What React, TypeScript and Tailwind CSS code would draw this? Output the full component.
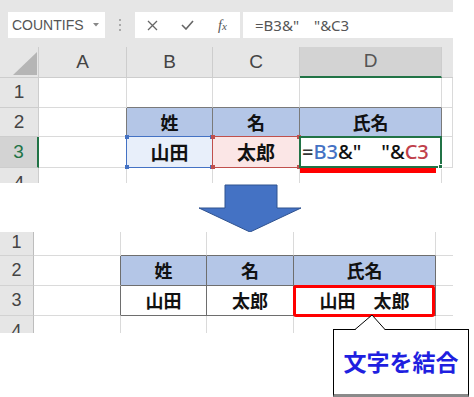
import React from "react";

const RH = "flex items-center justify-center bg-[#e6e6e6] border-r border-b border-[#cdcdcd] text-[19px] text-[#444] font-['Liberation_Sans',sans-serif]";
const CH = "flex items-center justify-center bg-[#e6e6e6] border-r border-b border-[#cdcdcd] text-[19px] text-[#444] font-['Liberation_Sans',sans-serif]";
const PLAIN = "border-r border-b border-[#dadada]";
const ABOVE = "border-r border-[#dadada] border-b border-b-[#7a7a7a]";
const LEFTOF = "border-b border-[#dadada] border-r border-r-[#7a7a7a]";
const HDR = "flex items-center justify-center bg-[#b4c6e7] border-r border-b border-[#7a7a7a] text-[18px] font-bold text-[#111] font-['Noto_Sans_CJK_JP',sans-serif]";
const ABOVE2 = "border-r border-[#dadada] border-b border-b-[#6e6e6e]";
const LEFTOF2 = "border-b border-[#dadada] border-r border-r-[#6e6e6e]";
const HDR2 = "flex items-center justify-center bg-[#b4c6e7] border-r border-b border-[#6e6e6e] text-[18px] font-bold text-[#111] font-['Noto_Sans_CJK_JP',sans-serif]";
const VAL2 = "relative flex items-center justify-center bg-white border-r border-b border-[#6e6e6e] text-[18px] font-bold text-[#111] font-['Noto_Sans_CJK_JP',sans-serif]";

function Toolbar() {
  return (
    <div className="flex h-[47px] items-start bg-[#e6e6e6] pt-[12px]">
      <div className="ml-[8px] flex h-[26px] w-[97px] items-center justify-between bg-white pl-[4px] pr-[6px]">
        <span className="font-['Liberation_Sans',sans-serif] text-[14px] text-[#555]">COUNTIFS</span>
        <svg width="6" height="4" viewBox="0 0 6 4">
          <polygon points="0,0 6,0 3,3.5" fill="#888" />
        </svg>
      </div>
      <div className="flex h-[26px] w-[30px] flex-col items-center justify-center gap-[3px]">
        <span className="h-[2px] w-[2px] bg-[#aaa]" />
        <span className="h-[2px] w-[2px] bg-[#aaa]" />
        <span className="h-[2px] w-[2px] bg-[#aaa]" />
      </div>
      <div className="flex h-[26px] w-[105px] items-center bg-white">
        <div className="flex w-[35px] justify-center">
          <svg width="11" height="11" viewBox="0 0 11 11">
            <path d="M1 1 L10 10 M10 1 L1 10" stroke="#666" strokeWidth="1.3" />
          </svg>
        </div>
        <div className="flex w-[35px] justify-center">
          <svg width="13" height="10" viewBox="0 0 13 10">
            <path d="M1 5 L5 9 L12 1" stroke="#666" strokeWidth="1.6" fill="none" />
          </svg>
        </div>
        <div className="flex w-[35px] justify-center">
          <span className="font-['Liberation_Serif',serif] text-[14px] italic text-[#555]">
            f<span className="text-[11px]">x</span>
          </span>
        </div>
      </div>
      <div className="ml-[3px] flex h-[26px] flex-1 items-center bg-white pl-[12px] font-['Noto_Sans',sans-serif] text-[15px] text-[#555]">
        =B3&amp;"　"&amp;C3
      </div>
    </div>
  );
}

function TopSheet() {
  return (
    <div className="w-[453px]">
      <Toolbar />
      <div className="grid grid-cols-[39px_88px_86px_87px_142px_11px] grid-rows-[31px_30px_29px_31px_15px]">
        <div className="relative bg-[#e6e6e6] border-r border-b border-[#cdcdcd]">
          <svg className="absolute left-0 top-0" width="39" height="31" viewBox="0 0 39 31">
            <polygon points="13,28 37,28 37,5" fill="#b5b5b5" />
          </svg>
        </div>
        <div className={CH}>A</div>
        <div className={CH}>B</div>
        <div className={CH}>C</div>
        <div className="flex items-center justify-center bg-[#d3d3d3] border-r border-[#cdcdcd] border-b-2 border-b-[#217346] text-[19px] text-[#555] font-['Liberation_Sans',sans-serif]">D</div>
        <div className="bg-[#e6e6e6] border-b border-[#cdcdcd]" />

        <div className={RH}>1</div>
        <div className={PLAIN} />
        <div className={ABOVE} />
        <div className={ABOVE} />
        <div className={ABOVE} />
        <div className={PLAIN} />

        <div className={RH}>2</div>
        <div className={LEFTOF} />
        <div className={HDR}>姓</div>
        <div className={HDR}>名</div>
        <div className={HDR}>氏名</div>
        <div className={PLAIN} />

        <div className="flex items-center justify-center bg-[#d3d3d3] border-b border-[#cdcdcd] border-r-2 border-r-[#217346] text-[19px] text-[#217346] font-['Liberation_Sans',sans-serif]">3</div>
        <div className={LEFTOF} />
        <div className="relative flex items-center justify-center bg-[#e8effa] border-r border-b border-[#7a7a7a] text-[19px] font-bold text-[#111] font-['Noto_Sans_CJK_JP',sans-serif]">
          山田
          <div className="absolute -left-px -top-px -right-px -bottom-px border border-[#4472c4]">
            <span className="absolute -left-[2px] -top-[2px] h-[4px] w-[4px] bg-[#4472c4]" />
            <span className="absolute -right-[2px] -top-[2px] h-[4px] w-[4px] bg-[#4472c4]" />
            <span className="absolute -left-[2px] -bottom-[2px] h-[4px] w-[4px] bg-[#4472c4]" />
            <span className="absolute -right-[2px] -bottom-[2px] h-[4px] w-[4px] bg-[#4472c4]" />
          </div>
        </div>
        <div className="relative flex items-center justify-center bg-[#fbe6e6] border-r border-b border-[#7a7a7a] text-[19px] font-bold text-[#111] font-['Noto_Sans_CJK_JP',sans-serif]">
          太郎
          <div className="absolute -left-px -top-px -right-px -bottom-px border border-[#c0504d]">
            <span className="absolute -left-[2px] -top-[2px] h-[4px] w-[4px] bg-[#c0504d]" />
            <span className="absolute -right-[2px] -top-[2px] h-[4px] w-[4px] bg-[#c0504d]" />
            <span className="absolute -left-[2px] -bottom-[2px] h-[4px] w-[4px] bg-[#c0504d]" />
            <span className="absolute -right-[2px] -bottom-[2px] h-[4px] w-[4px] bg-[#c0504d]" />
          </div>
        </div>
        <div className="relative flex items-center bg-white border-r border-b border-[#7a7a7a] pl-[2px] font-['Noto_Sans',sans-serif] text-[20px] font-medium text-[#111]">
          <span className="text-[#333]">=</span>
          <span className="text-[#4472c4]">B3</span>
          <span>&amp;"　"&amp;</span>
          <span className="text-[#c0404a]">C3</span>
          <div className="absolute -left-px -top-px -right-px -bottom-px border-2 border-[#217346]">
            <span className="absolute -right-[3px] -bottom-[3px] h-[5px] w-[5px] bg-[#217346] border border-white" />
          </div>
          <div className="absolute left-0 top-full mt-px h-[5px] w-[136px] bg-[#ff0000]" />
        </div>
        <div className={PLAIN} />

        <div className="overflow-hidden bg-[#e6e6e6] border-r border-[#cdcdcd]">
          <div className="flex h-[30px] items-center justify-center text-[19px] text-[#444] font-['Liberation_Sans',sans-serif]">4</div>
        </div>
        <div className="border-r border-[#dadada]" />
        <div className="border-r border-[#dadada]" />
        <div className="border-r border-[#dadada]" />
        <div className="border-r border-[#dadada]" />
        <div />
      </div>
    </div>
  );
}

function Arrow() {
  return (
    <div className="h-[49px] w-[453px]">
      <svg width="453" height="49" viewBox="0 0 453 49">
        <polygon
          points="225,2 277,2 277,25 301,25 250,49 199,25 225,25"
          fill="#4472c4"
          stroke="#2f528f"
          strokeWidth="1"
        />
      </svg>
    </div>
  );
}

function BottomSheet() {
  return (
    <div className="grid w-[453px] grid-cols-[34px_87px_86px_87px_142px_17px] grid-rows-[24px_30px_30px_17px]">
      <div className="flex items-center justify-center bg-[#e6e6e6] border-r border-b border-r-[#bdbdbd] border-b-[#d2d2d2] pb-[3px] text-[18px] text-[#444] font-['Liberation_Sans',sans-serif]">1</div>
      <div className={PLAIN} />
      <div className={ABOVE2} />
      <div className={ABOVE2} />
      <div className={ABOVE2} />
      <div className="border-b border-[#dadada]" />

      <div className="flex items-center justify-center bg-[#e6e6e6] border-r border-b border-r-[#bdbdbd] border-b-[#d2d2d2] text-[18px] text-[#444] font-['Liberation_Sans',sans-serif]">2</div>
      <div className={LEFTOF2} />
      <div className={HDR2}>姓</div>
      <div className={HDR2}>名</div>
      <div className={HDR2}>氏名</div>
      <div className="border-b border-[#dadada]" />

      <div className="flex items-center justify-center bg-[#e6e6e6] border-r border-b border-r-[#bdbdbd] border-b-[#d2d2d2] text-[18px] text-[#444] font-['Liberation_Sans',sans-serif]">3</div>
      <div className={LEFTOF2} />
      <div className={VAL2}>山田</div>
      <div className={VAL2}>太郎</div>
      <div className={VAL2}>
        山田　太郎
        <div className="absolute -left-px -top-px right-0 -bottom-[2px] rounded-[3px] border-[3px] border-[#ff0000]" />
      </div>
      <div className="border-b border-[#dadada]" />

      <div className="overflow-hidden bg-[#e6e6e6] border-r border-r-[#bdbdbd]">
        <div className="flex h-[30px] items-center justify-center text-[18px] text-[#444] font-['Liberation_Sans',sans-serif]">4</div>
      </div>
      <div className="border-r border-[#dadada]" />
      <div className="border-r border-[#dadada]" />
      <div className="border-r border-[#dadada]" />
      <div className="border-r border-[#dadada]" />
      <div />
    </div>
  );
}

function Callout() {
  return (
    <>
      <div className="absolute left-[333px] top-[329px] flex h-[68px] w-[136px] items-center justify-center border border-black border-b-[3px] border-b-[#8a8a8a] bg-white pb-[2px]">
        <span className="font-['Noto_Sans_CJK_JP',sans-serif] text-[23px] font-bold leading-none text-[#1f1fe0]">文字を結合</span>
      </div>
      <svg className="absolute left-[353px] top-[314px]" width="34" height="17" viewBox="0 0 34 17">
        <polygon points="2,16 19,1 32,16" fill="white" />
        <path d="M2 15.5 L19 1 L32 15.5" stroke="black" strokeWidth="1" fill="none" />
      </svg>
    </>
  );
}

export default function App() {
  return (
    <div className="relative h-[397px] w-[474px] overflow-hidden bg-white">
      <TopSheet />
      <Arrow />
      <BottomSheet />
      <Callout />
    </div>
  );
}
